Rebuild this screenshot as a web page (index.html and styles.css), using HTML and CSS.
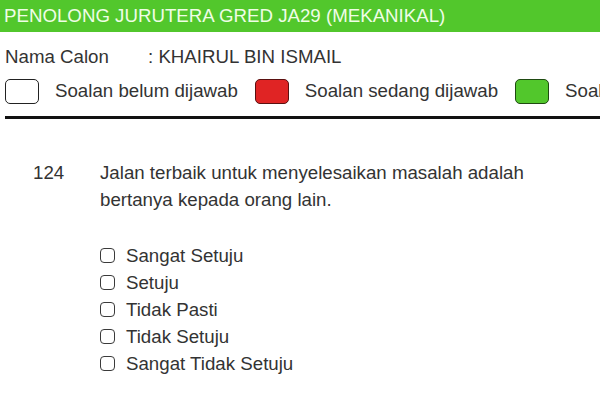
FILE: index.html
```html
<!DOCTYPE html>
<html>
<head>
<meta charset="utf-8">
<link rel="stylesheet" href="styles.css">
</head>
<body>
<div class="page">
  <header class="title">PENOLONG JURUTERA GRED JA29 (MEKANIKAL)</header>
  <div class="name-row">
    <span class="name-label">Nama Calon</span>
    <span class="name-value">: KHAIRUL BIN ISMAIL</span>
  </div>
  <div class="legend">
    <span class="swatch swatch-empty"></span>
    <span class="legend-text">Soalan belum dijawab</span>
    <span class="swatch swatch-red"></span>
    <span class="legend-text">Soalan sedang dijawab</span>
    <span class="swatch swatch-green"></span>
    <span class="legend-text">Soalan sudah dijawab</span>
  </div>
  <div class="rule"></div>
  <div class="question">
    <div class="q-num">124</div>
    <div class="q-body">
      <div class="q-text">Jalan terbaik untuk menyelesaikan masalah adalah bertanya kepada orang lain.</div>
      <ul class="options">
        <li><span class="box"></span>Sangat Setuju</li>
        <li><span class="box"></span>Setuju</li>
        <li><span class="box"></span>Tidak Pasti</li>
        <li><span class="box"></span>Tidak Setuju</li>
        <li><span class="box"></span>Sangat Tidak Setuju</li>
      </ul>
    </div>
  </div>
</div>
</body>
</html>
```
FILE: styles.css
```css
html, body {
  margin: 0;
  padding: 0;
  background: #ffffff;
  overflow: hidden;
}
.page {
  width: 600px;
  height: 408px;
  overflow: hidden;
  font-family: "Liberation Sans", Arial, sans-serif;
  color: #333333;
  font-size: 18.7px;
}
.title {
  background: #52c72c;
  color: #effde6;
  height: 32px;
  line-height: 32px;
  padding-left: 4px;
  font-size: 18.7px;
  white-space: nowrap;
}
.name-row {
  display: flex;
  height: 26px;
  line-height: 26px;
  margin-top: 12px;
  padding-left: 5px;
  white-space: nowrap;
}
.name-label {
  width: 143px;
}
.legend {
  display: flex;
  align-items: center;
  margin-top: 8px;
  padding-left: 5px;
  height: 26px;
  white-space: nowrap;
}
.swatch {
  flex: none;
  width: 32px;
  height: 23px;
  border: 1px solid #222;
  border-radius: 5px;
  background: #fff;
}
.swatch-red {
  background: #e02424;
  border-color: #5a1010;
}
.swatch-green {
  background: #52c72c;
  border-color: #1f4a12;
}
.legend-text {
  margin-left: 16px;
  margin-right: 17px;
}
.rule {
  margin-top: 12px;
  margin-left: 5px;
  height: 3px;
  background: #111;
}
.question {
  display: flex;
  margin-top: 40px;
}
.q-num {
  flex: none;
  width: 67px;
  padding-left: 33px;
  line-height: 27px;
}
.q-body {
  width: 460px;
}
.q-text {
  line-height: 27px;
}
.options {
  list-style: none;
  margin: 29px 0 0 0;
  padding: 0;
}
.options li {
  display: flex;
  align-items: center;
  height: 27px;
}
.box {
  flex: none;
  width: 13px;
  height: 13px;
  border: 1.5px solid #3a3a3a;
  border-radius: 4px;
  margin-right: 11px;
}
```
